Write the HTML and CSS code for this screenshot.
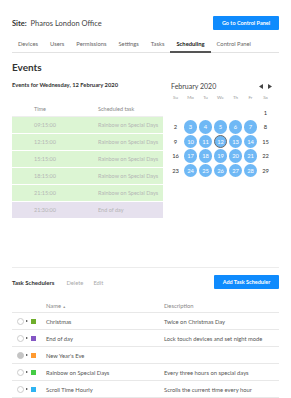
FILE: index.html
```html
<!DOCTYPE html>
<html lang="en">
<head>
    <meta charset="UTF-8">
    <meta name="viewport" content="width=device-width, initial-scale=1.0">
    <title>Pharos London Office - Scheduling</title>
    <link rel="stylesheet" href="styles.css">
</head>
<body>

<header class="site-bar">
    <div class="site-name"><strong>Site:</strong> Pharos London Office</div>
    <button class="btn-primary">Go to Control Panel</button>
</header>

<nav class="tabs">
    <a class="tab">Devices</a>
    <a class="tab">Users</a>
    <a class="tab">Permissions</a>
    <a class="tab">Settings</a>
    <a class="tab">Tasks</a>
    <a class="tab active">Scheduling</a>
    <a class="tab">Control Panel</a>
</nav>

<section class="events">
    <h2>Events</h2>
    <div class="events-body">
        <div class="events-list">
            <p class="events-date">Events for Wednesday, 12 February 2020</p>
            <table class="event-table">
                <thead>
                    <tr><th class="time">Time</th><th>Scheduled task</th></tr>
                </thead>
                <tbody>
                    <tr class="task-rainbow"><td class="time">09:15:00</td><td>Rainbow on Special Days</td></tr>
                    <tr class="task-rainbow"><td class="time">12:15:00</td><td>Rainbow on Special Days</td></tr>
                    <tr class="task-rainbow"><td class="time">15:15:00</td><td>Rainbow on Special Days</td></tr>
                    <tr class="task-rainbow"><td class="time">18:15:00</td><td>Rainbow on Special Days</td></tr>
                    <tr class="task-rainbow"><td class="time">21:15:00</td><td>Rainbow on Special Days</td></tr>
                    <tr class="task-endofday"><td class="time">21:30:00</td><td>End of day</td></tr>
                </tbody>
            </table>
        </div>

        <div class="calendar">
            <div class="cal-head">
                <span class="cal-month">February 2020</span>
                <span class="cal-nav">
                    <svg width="4" height="5" viewBox="0 0 4 5"><path d="M4 0 L0 2.5 L4 5 Z" fill="#444"/></svg>
                    <svg width="4" height="5" viewBox="0 0 4 5"><path d="M0 0 L4 2.5 L0 5 Z" fill="#444"/></svg>
                </span>
            </div>
            <div class="cal-grid">
                <span class="wd">Su</span><span class="wd">Mo</span><span class="wd">Tu</span><span class="wd">We</span><span class="wd">Th</span><span class="wd">Fr</span><span class="wd">Sa</span>
            </div>
            <div class="cal-grid cal-days" id="cal-days"></div>
        </div>
    </div>
</section>

<section class="schedulers">
    <div class="toolbar">
        <span class="toolbar-title">Task Schedulers</span>
        <span class="toolbar-link">Delete</span>
        <span class="toolbar-link">Edit</span>
        <button class="btn-primary add-btn">Add Task Scheduler</button>
    </div>

    <div class="sched-row sched-head">
        <span></span><span></span><span></span>
        <span>Name <small class="sort">&#9650;</small></span>
        <span>Description</span>
    </div>
    <div class="sched-row">
        <span class="radio"></span><span class="caret"></span><span class="swatch" style="background:#6fae2c"></span>
        <span>Christmas</span><span>Twice on Christmas Day</span>
    </div>
    <div class="sched-row">
        <span class="radio"></span><span class="caret"></span><span class="swatch" style="background:#8456c4"></span>
        <span>End of day</span><span>Lock touch devices and set night mode</span>
    </div>
    <div class="sched-row">
        <span class="radio filled"></span><span class="caret"></span><span class="swatch" style="background:#ff9a30"></span>
        <span>New Year's Eve</span><span></span>
    </div>
    <div class="sched-row">
        <span class="radio"></span><span class="caret"></span><span class="swatch" style="background:#45cc45"></span>
        <span>Rainbow on Special Days</span><span>Every three hours on special days</span>
    </div>
    <div class="sched-row">
        <span class="radio"></span><span class="caret"></span><span class="swatch" style="background:#2eb4f2"></span>
        <span>Scroll Time Hourly</span><span>Scrolls the current time every hour</span>
    </div>
</section>

<script>
    // February 2020 starts on a Saturday
    const days = document.getElementById("cal-days");
    const blanks = 6;
    let html = "";
    for (let i = 0; i < blanks; i++) {
        html += `<span></span>`;
    }
    for (let d = 1; d <= 29; d++) {
        const dow = (blanks + d - 1) % 7;
        const weekday = dow > 0 && dow < 6;
        const cls = ["day", weekday ? "scheduled" : "", d === 12 ? "today" : ""].join(" ");
        html += `<span class="${cls}">${d}</span>`;
    }
    days.innerHTML = html;
</script>

</body>
</html>
```

FILE: styles.css
```css
body {
    font-family: 'Lato', sans-serif;
    color: #333;
    margin: 0;
    padding: 0 12px;
    font-size: 6px;
    background: #fff;
}
.site-bar {
    display: flex;
    justify-content: space-between;
    align-items: center;
    margin-top: 16px;
}
.site-name {
    font-size: 7.5px;
    color: #444;
}
.site-name strong {
    color: #333;
    margin-right: 2px;
}
.btn-primary {
    background-color: #0f8bfd;
    color: white;
    border: none;
    border-radius: 1px;
    font-family: 'Lato', sans-serif;
    font-size: 5.5px;
    font-weight: bold;
    height: 14px;
    width: 66px;
    padding: 0;
}
.tabs {
    display: flex;
    margin-top: 6px;
    border-bottom: 1px solid #e2e2e2;
}
.tab {
    font-size: 5.8px;
    line-height: 8px;
    color: #666;
    padding: 4px 6px 3px;
    border-bottom: 2px solid transparent;
    margin-bottom: -1px;
}
.tab.active {
    color: #222;
    font-weight: bold;
    border-bottom-color: #555;
}
.events h2 {
    font-size: 10px;
    line-height: 12px;
    margin: 8px 0 0;
    color: #333;
}
.events-body {
    display: flex;
    gap: 5px;
    margin-top: 8px;
}
.events-list {
    width: 151px;
}
.events-date {
    margin: 0;
    line-height: 8px;
    font-weight: bold;
    font-size: 5.8px;
    color: #333;
}
.event-table {
    width: 151px;
    margin-top: 13px;
    border-collapse: collapse;
    table-layout: fixed;
}
.event-table th {
    font-weight: normal;
    color: #888;
    text-align: left;
    height: 14px;
    padding: 0;
    border-bottom: 1px solid #eee;
    font-size: 5.5px;
}
.event-table td {
    height: 16px;
    padding: 0;
    color: #b5b5b5;
    font-size: 5.5px;
    white-space: nowrap;
    overflow: hidden;
    border-bottom: 1px solid #fff;
}
.event-table .time {
    width: 64px;
    padding-left: 22px;
}
.task-rainbow td {
    background-color: #dcf5d3;
}
.task-endofday td {
    background-color: #e6e1ee;
}
.calendar {
    width: 106px;
}
.cal-head {
    display: flex;
    justify-content: space-between;
    align-items: center;
    height: 10px;
    padding-left: 3px;
}
.cal-month {
    font-size: 7px;
    color: #444;
}
.cal-nav {
    display: flex;
    gap: 5px;
    margin-right: 2px;
}
.cal-grid {
    display: grid;
    grid-template-columns: repeat(7, 15px);
    justify-items: center;
    align-items: center;
}
.wd {
    font-size: 4.5px;
    color: #999;
    height: 10px;
    line-height: 10px;
    margin-top: 2px;
}
.cal-days {
    grid-auto-rows: 14.5px;
    margin-top: 2px;
}
.day {
    width: 13.5px;
    height: 13.5px;
    line-height: 13.5px;
    text-align: center;
    font-size: 5.8px;
    color: #333;
    border-radius: 50%;
    box-sizing: border-box;
}
.day.scheduled {
    background-color: #6fb8f5;
    color: #fff;
}
.day.today {
    border: 1px solid #6a6a6a;
    line-height: 11.5px;
}
.schedulers {
    margin-top: 48px;
    border-top: 1px solid #ececec;
}
.toolbar {
    display: flex;
    align-items: center;
    margin-top: 7px;
}
.toolbar-title {
    font-size: 6px;
    font-weight: bold;
    color: #333;
    margin-right: 12px;
}
.toolbar-link {
    color: #aaa;
    font-size: 5.8px;
    margin-right: 10px;
}
.add-btn {
    margin-left: auto;
    width: 65px;
}
.sched-row {
    display: grid;
    grid-template-columns: 13px 5px 16px 118px 1fr;
    align-items: center;
    height: 16px;
    border-bottom: 1px solid #e8e8e8;
    font-size: 5.8px;
    color: #555;
}
.sched-head {
    margin-top: 10px;
    height: 13px;
    color: #888;
}
.sort {
    font-size: 3.5px;
    color: #999;
}
.radio {
    width: 5px;
    height: 5px;
    border: 0.5px solid #ccc;
    border-radius: 50%;
    margin-left: 5px;
}
.radio.filled {
    background-color: #c4c4c4;
    border-color: #c4c4c4;
}
.caret {
    width: 0;
    height: 0;
    border-top: 1.5px solid transparent;
    border-bottom: 1.5px solid transparent;
    border-left: 2px solid #333;
    margin-left: 1px;
}
.swatch {
    width: 5px;
    height: 5px;
    margin-left: 1px;
}
```
